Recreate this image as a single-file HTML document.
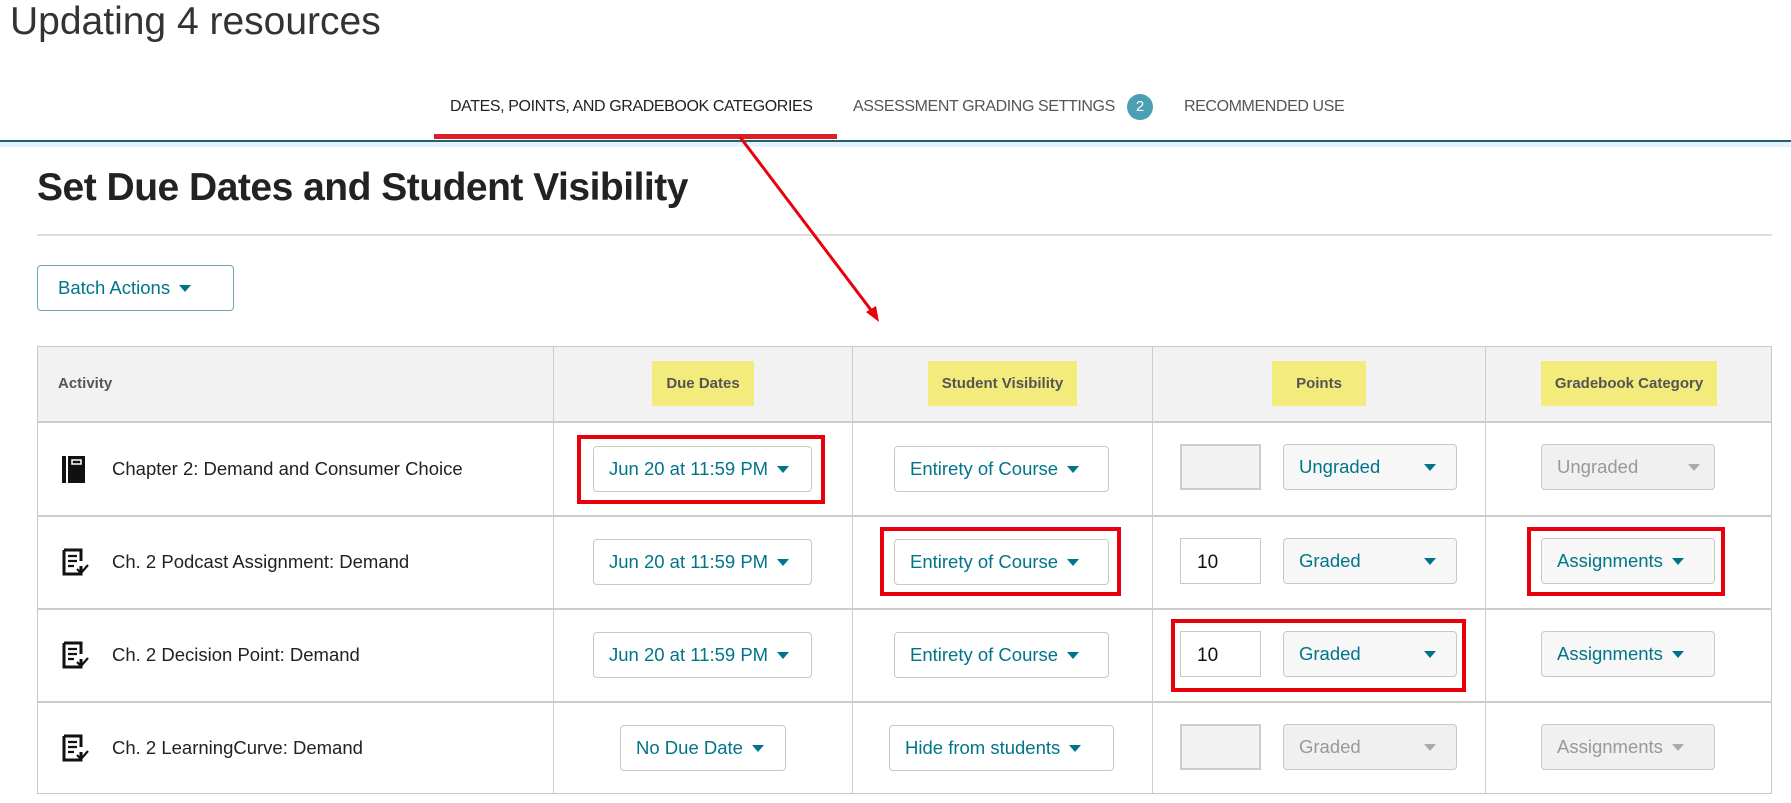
<!DOCTYPE html>
<html><head><meta charset="utf-8"><style>
*{box-sizing:border-box;margin:0;padding:0}
body{width:1791px;height:803px;background:#fff;font-family:"Liberation Sans",sans-serif;position:relative;overflow:hidden;color:#222}
.a{position:absolute}
.tab{position:absolute;top:98px;font-size:16px;color:#555;letter-spacing:-0.4px}
.th{position:absolute;top:346px;height:75px;display:flex;align-items:center;justify-content:center;font-size:15px;font-weight:bold;color:#555}
.hl{background:#f3eb7c;padding:14px 14px;color:#555}
.sel{position:absolute;height:46px;border:1px solid #c8c8c8;border-radius:4px;background:#fff;color:#00758a;font-size:18.5px;display:flex;align-items:center;padding-left:15px}
.sel.g{background:#f7f7f7}
.sel.d{background:#f0f0f0;color:#999}
.tri{display:inline-block;width:0;height:0;border-left:6px solid transparent;border-right:6px solid transparent;border-top:7px solid #00758a;margin-left:9px}
.d .tri{border-top-color:#aaa}
.inp{position:absolute;width:81px;height:46px;border:1px solid #c8c8c8;background:#fff;font-size:19px;display:flex;align-items:center;padding-left:16px;padding-top:3px;color:#111}
.inp.d{background:#f2f2f2;border:2px solid #ccc}
.red{position:absolute;border:4px solid #e8000b}
.name{position:absolute;left:112px;font-size:18.5px;color:#222}
.ic{position:absolute;left:62px}
</style></head><body>
<div class="a" style="left:10px;top:0px;font-size:39px;color:#333">Updating 4 resources</div>
<div class="tab" style="left:450px;color:#222">DATES, POINTS, AND GRADEBOOK CATEGORIES</div>
<div class="tab" style="left:853px">ASSESSMENT GRADING SETTINGS</div>
<div class="a" style="left:1127px;top:94px;width:26px;height:26px;border-radius:50%;background:#4a9fb3;color:#fff;font-size:15px;text-align:center;line-height:26px">2</div>
<div class="tab" style="left:1184px">RECOMMENDED USE</div>
<div class="a" style="left:434px;top:134px;width:403px;height:5px;background:#d9202a"></div>
<div class="a" style="left:0;top:140px;width:1791px;height:2px;background:#24606d"></div>
<div class="a" style="left:0;top:142px;width:1791px;height:5px;background:#e6f2fb"></div>
<div class="a" style="left:37px;top:166px;font-size:39px;font-weight:bold;color:#222;letter-spacing:-0.5px">Set Due Dates and Student Visibility</div>
<div class="a" style="left:37px;top:234px;width:1735px;height:2px;background:#ddd"></div>
<div class="a" style="left:37px;top:265px;width:197px;height:46px;border:1px solid #6aa7b3;border-radius:4px;color:#00758a;font-size:18.5px;display:flex;align-items:center;padding-left:20px">Batch Actions<span class="tri"></span></div>

<div class="a" style="left:37px;top:346px;width:1735px;height:448px;border:1px solid #c8c8c8"></div>
<div class="a" style="left:38px;top:347px;width:1733px;height:74px;background:#f2f2f2"></div>
<div class="a" style="left:37px;top:421px;width:1735px;height:2px;background:#ccc"></div>
<div class="a" style="left:37px;top:515px;width:1735px;height:2px;background:#ccc"></div>
<div class="a" style="left:37px;top:608px;width:1735px;height:2px;background:#ccc"></div>
<div class="a" style="left:37px;top:701px;width:1735px;height:2px;background:#ccc"></div>
<div class="a" style="left:553px;top:346px;width:1px;height:448px;background:#ccc"></div>
<div class="a" style="left:852px;top:346px;width:1px;height:448px;background:#ccc"></div>
<div class="a" style="left:1152px;top:346px;width:1px;height:448px;background:#ccc"></div>
<div class="a" style="left:1485px;top:346px;width:1px;height:448px;background:#ccc"></div>

<div class="th" style="left:58px;justify-content:flex-start">Activity</div>
<div class="th" style="left:554px;width:298px"><span class="hl">Due Dates</span></div>
<div class="th" style="left:853px;width:299px"><span class="hl">Student Visibility</span></div>
<div class="th" style="left:1153px;width:332px"><span class="hl" style="padding:14px 24px">Points</span></div>
<div class="th" style="left:1486px;width:286px"><span class="hl">Gradebook Category</span></div>

<svg class="ic" style="top:455px" width="26" height="30" viewBox="0 0 26 30"><rect x="0" y="1" width="4" height="27" fill="#111"/><rect x="6" y="1" width="17" height="27" fill="#111"/><rect x="10" y="5" width="9" height="4" fill="none" stroke="#fff" stroke-width="1.5"/></svg>
<svg class="ic" style="top:548px" width="28" height="28" viewBox="0 0 28 28"><path d="M2 2h17v11M19 18v8H2V2" fill="none" stroke="#111" stroke-width="3"/><path d="M6 8h9M6 13h9M6 18h6" stroke="#111" stroke-width="2.2"/><path d="M15 21l4 4 7-8" fill="none" stroke="#111" stroke-width="2.2"/></svg>
<svg class="ic" style="top:641px" width="28" height="28" viewBox="0 0 28 28"><path d="M2 2h17v11M19 18v8H2V2" fill="none" stroke="#111" stroke-width="3"/><path d="M6 8h9M6 13h9M6 18h6" stroke="#111" stroke-width="2.2"/><path d="M15 21l4 4 7-8" fill="none" stroke="#111" stroke-width="2.2"/></svg>
<svg class="ic" style="top:734px" width="28" height="28" viewBox="0 0 28 28"><path d="M2 2h17v11M19 18v8H2V2" fill="none" stroke="#111" stroke-width="3"/><path d="M6 8h9M6 13h9M6 18h6" stroke="#111" stroke-width="2.2"/><path d="M15 21l4 4 7-8" fill="none" stroke="#111" stroke-width="2.2"/></svg>

<div class="name" style="top:458px">Chapter 2: Demand and Consumer Choice</div>
<div class="name" style="top:551px">Ch. 2 Podcast Assignment: Demand</div>
<div class="name" style="top:644px">Ch. 2 Decision Point: Demand</div>
<div class="name" style="top:737px">Ch. 2 LearningCurve: Demand</div>

<div class="sel" style="left:593px;top:446px;width:219px">Jun 20 at 11:59 PM<span class="tri"></span></div>
<div class="sel" style="left:894px;top:446px;width:215px">Entirety of Course<span class="tri"></span></div>
<div class="inp d" style="left:1180px;top:444px"></div>
<div class="sel g" style="left:1283px;top:444px;width:174px">Ungraded<span class="tri" style="margin-left:auto;margin-right:20px"></span></div>
<div class="sel d" style="left:1541px;top:444px;width:174px">Ungraded<span class="tri" style="margin-left:auto;margin-right:14px"></span></div>

<div class="sel" style="left:593px;top:539px;width:219px">Jun 20 at 11:59 PM<span class="tri"></span></div>
<div class="sel" style="left:894px;top:539px;width:215px">Entirety of Course<span class="tri"></span></div>
<div class="inp" style="left:1180px;top:538px">10</div>
<div class="sel g" style="left:1283px;top:538px;width:174px">Graded<span class="tri" style="margin-left:auto;margin-right:20px"></span></div>
<div class="sel g" style="left:1541px;top:538px;width:174px">Assignments<span class="tri"></span></div>

<div class="sel" style="left:593px;top:632px;width:219px">Jun 20 at 11:59 PM<span class="tri"></span></div>
<div class="sel" style="left:894px;top:632px;width:215px">Entirety of Course<span class="tri"></span></div>
<div class="inp" style="left:1180px;top:631px">10</div>
<div class="sel g" style="left:1283px;top:631px;width:174px">Graded<span class="tri" style="margin-left:auto;margin-right:20px"></span></div>
<div class="sel g" style="left:1541px;top:631px;width:174px">Assignments<span class="tri"></span></div>

<div class="sel" style="left:620px;top:725px;width:166px">No Due Date<span class="tri"></span></div>
<div class="sel" style="left:889px;top:725px;width:225px">Hide from students<span class="tri"></span></div>
<div class="inp d" style="left:1180px;top:724px"></div>
<div class="sel d" style="left:1283px;top:724px;width:174px">Graded<span class="tri" style="margin-left:auto;margin-right:20px"></span></div>
<div class="sel d" style="left:1541px;top:724px;width:174px">Assignments<span class="tri"></span></div>

<div class="red" style="left:577px;top:435px;width:248px;height:69px"></div>
<div class="red" style="left:880px;top:527px;width:241px;height:69px"></div>
<div class="red" style="left:1527px;top:527px;width:198px;height:69px"></div>
<div class="red" style="left:1171px;top:619px;width:295px;height:73px"></div>
<svg class="a" style="left:0;top:0" width="1791" height="803"><line x1="740" y1="137" x2="874" y2="314" stroke="#e8000b" stroke-width="3"/><path d="M866 312L879 322L876 306Z" fill="#e8000b"/></svg>
</body></html>
